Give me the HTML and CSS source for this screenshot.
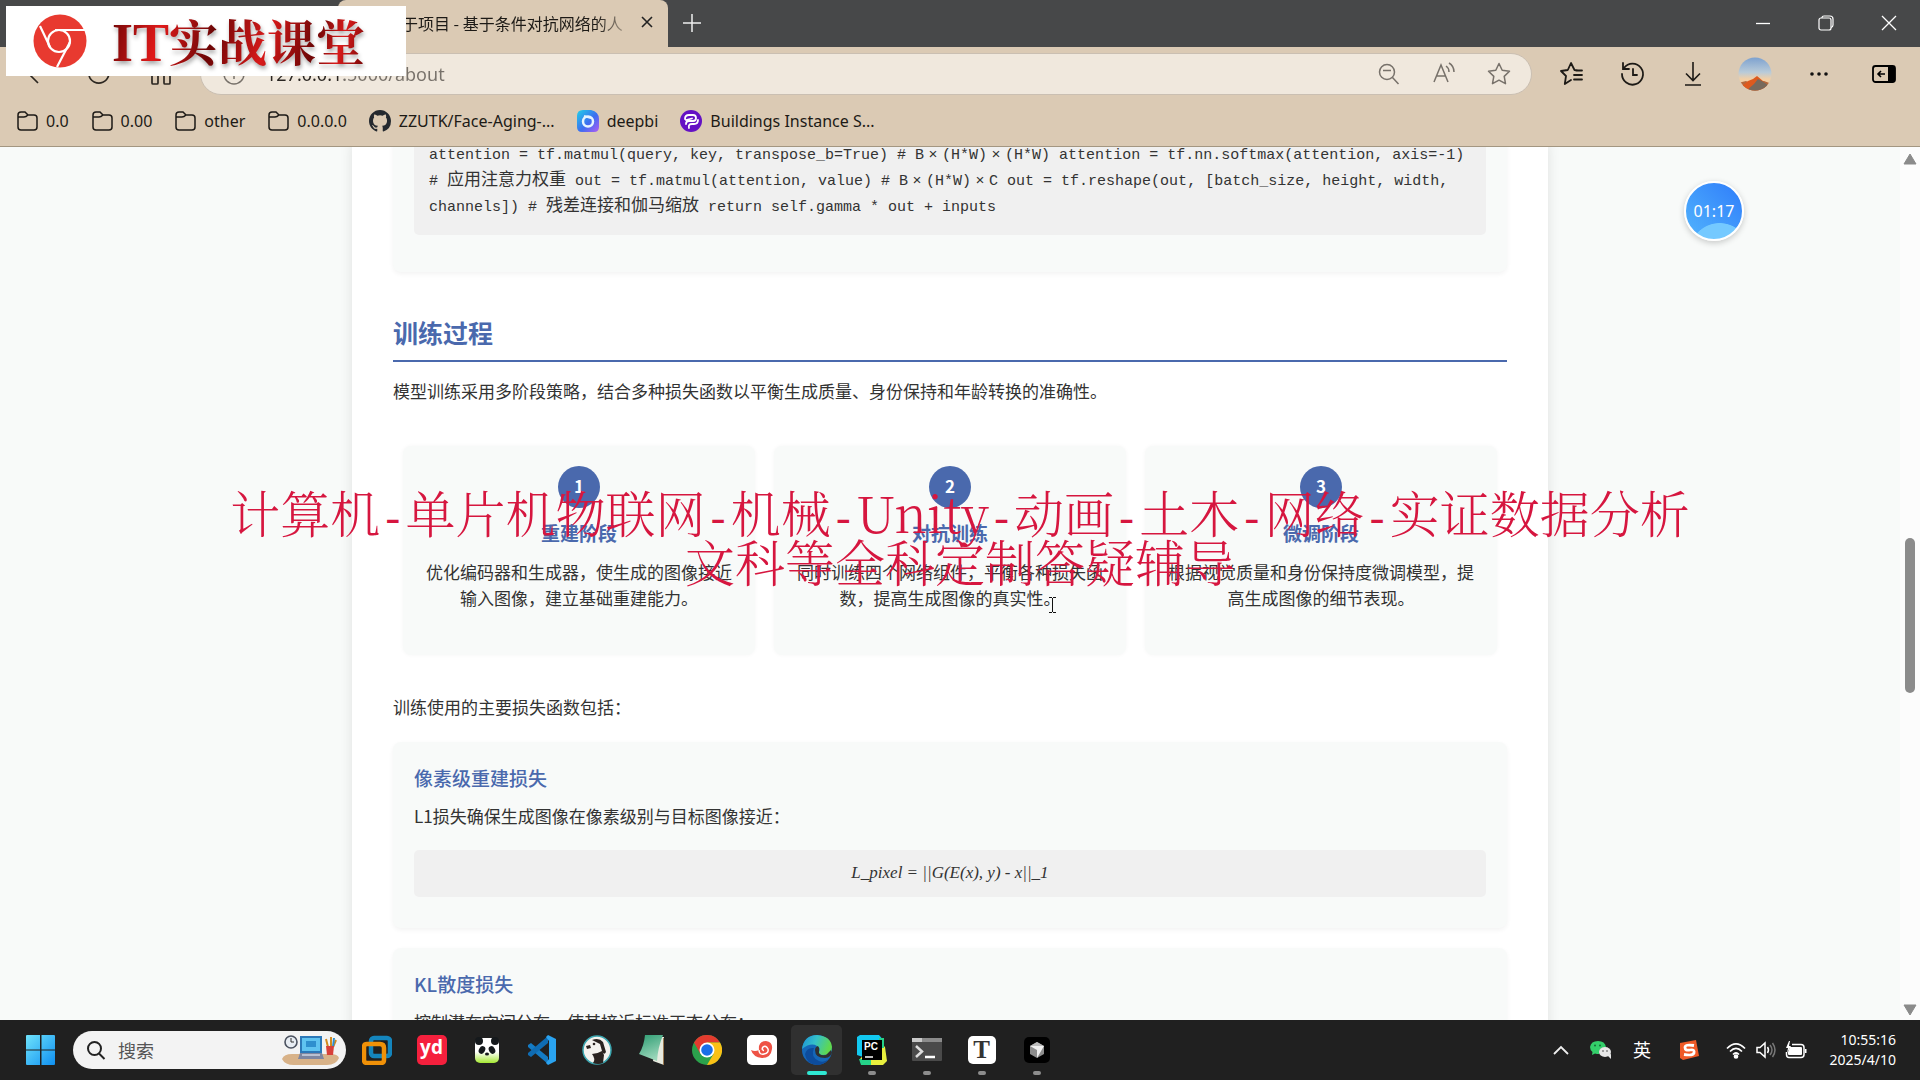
FILE: index.html
```html
<!DOCTYPE html>
<html lang="zh-CN">
<head>
<meta charset="utf-8">
<title>关于项目</title>
<link rel="stylesheet" href="styles.css">
</head>
<body>
<header class="browser">
  <div class="titlebar">
    <div class="tab-back"></div>
    <div class="tab">
      <span class="tab-title">关于项目 - 基于条件对抗网络的人</span>
      <button class="tab-close" aria-label="关闭标签页"><svg width="12" height="12" viewBox="0 0 12 12"><path d="M1 1l10 10M11 1L1 11" stroke="#222" stroke-width="1.6"/></svg></button>
    </div>
    <button class="tab-new" aria-label="新建标签页"><svg width="20" height="20" viewBox="0 0 20 20"><path d="M10 1v18M1 10h18" stroke="#eee" stroke-width="1.5"/></svg></button>
    <div class="window-controls">
      <button aria-label="最小化"><svg width="16" height="16" viewBox="0 0 16 16"><path d="M1 8.500h14" stroke="#fff" stroke-width="1.300"/></svg></button>
      <button aria-label="还原"><svg width="16" height="16" viewBox="0 0 16 16" fill="none" stroke="#fff" stroke-width="1.200"><rect x="1" y="3" width="12" height="12" rx="2"/><path d="M4 3V2.500Q4 1 6 1h6q3 0 3 3v6q0 2-2 2.500"/></svg></button>
      <button aria-label="关闭"><svg width="16" height="16" viewBox="0 0 16 16"><path d="M1 1l14 14M15 1L1 15" stroke="#fff" stroke-width="1.300"/></svg></button>
    </div>
  </div>

  <div class="toolbar">
    <div class="nav">
      <button aria-label="后退"><svg width="24" height="24" viewBox="0 0 24 24" fill="none" stroke="#2c2721" stroke-width="1.700"><path d="M15 3l-8 9 9 9"/></svg></button>
      <button aria-label="刷新"><svg width="24" height="24" viewBox="0 0 24 24" fill="none" stroke="#2c2721" stroke-width="1.700"><path d="M20 6a10 9.500 0 1 1-8-4M20 1v5h-5"/></svg></button>
      <button aria-label="主页"><svg width="24" height="24" viewBox="0 0 24 24" fill="none" stroke="#2c2721" stroke-width="1.700"><rect x="3" y="2" width="6" height="20" rx="1"/><rect x="15" y="2" width="6" height="20" rx="1"/></svg></button>
    </div>
    <div class="address">
      <svg width="24" height="24" viewBox="0 0 24 24" fill="none" stroke="#77716a" stroke-width="1.500"><circle cx="12" cy="12" r="10"/><path d="M12 10v7M12 6.500v1.500"/></svg>
      <input class="address-input" type="text" value="127.0.0.1:5000/about" aria-label="地址">
      <button aria-label="缩小"><svg width="24" height="24" viewBox="0 0 24 24" fill="none" stroke="#77716a" stroke-width="1.500"><circle cx="10" cy="10" r="7.500"/><path d="M6 8.500h8M15.500 15.500l6 6.500"/></svg></button>
      <button aria-label="朗读"><svg width="24" height="24" viewBox="0 0 24 24" fill="none" stroke="#77716a" stroke-width="1.500"><path d="M2 20L9 3l7 17M4.500 14h9M14 4q3 2 3 6M17 1q5 3 5 9"/></svg></button>
      <button aria-label="收藏"><svg width="24" height="24" viewBox="0 0 24 24" fill="none" stroke="#77716a" stroke-width="1.500" stroke-linejoin="round"><path d="M12 1.500l3.200 6.700 7.300 1-5.300 5.200 1.300 7.300L12 18.200l-6.500 3.500 1.300-7.300L1.500 9.200l7.300-1z"/></svg></button>
    </div>
    <div class="tools">
      <button aria-label="收藏夹"><svg width="26" height="26" viewBox="0 0 26 26" fill="none" stroke="#1d1a16" stroke-width="1.800" stroke-linejoin="round" stroke-linecap="round"><path d="M19 9.500l-3.500-.5-3.500-7-3.200 7L2 10l5 5-1.200 8 6.200-4M15 14h8M15 18.500h8M17 9.500h6"/></svg></button>
      <button aria-label="历史记录"><svg width="26" height="26" viewBox="0 0 26 26" fill="none" stroke="#1d1a16" stroke-width="1.800" stroke-linecap="round"><path d="M4 7a10.500 10.500 0 1 1-2 6M3 2v6h6M13 8v6h4"/></svg></button>
      <button aria-label="下载"><svg width="24" height="26" viewBox="0 0 24 26" fill="none" stroke="#1d1a16" stroke-width="1.600"><path d="M11 1v18M4 12.500l7 7 7-7M3 24h16"/></svg></button>
      <button aria-label="个人资料"><svg width="34" height="34" viewBox="0 0 34 34"><defs><clipPath id="av"><circle cx="17" cy="17" r="16.500"/></clipPath><linearGradient id="sky" x2="0" y2="1"><stop stop-color="#7ba0cf"/><stop offset=".45" stop-color="#b9cbd9"/><stop offset=".65" stop-color="#f2cfa5"/></linearGradient></defs><g clip-path="url(#av)"><path fill="url(#sky)" d="M0 0h34v34H0z"/><path fill="#b5683c" d="M0 26l8-2 4 2 14-2 8 3v7H0z"/><path fill="#dd5a1e" d="M4 29l6-5 5-2 4-3 6 5 5 6v4H4z"/><path fill="#77695c" d="M8 34l8-7 4-5 4 2 6 4 3 6z"/></g></svg></button>
      <button aria-label="更多"><svg width="20" height="6" viewBox="0 0 20 6" fill="#111"><circle cx="3" cy="3" r="1.800"/><circle cx="10" cy="3" r="1.800"/><circle cx="17" cy="3" r="1.800"/></svg></button>
      <button aria-label="侧栏"><svg width="24" height="20" viewBox="0 0 24 20"><rect x="1" y="2" width="22" height="16" rx="2.500" fill="none" stroke="#000" stroke-width="1.800"/><path d="M16 2h5q2 0 2 2v12q0 2-2 2h-5z"/><path d="M13 10H6M9 7l-3 3 3 3" fill="none" stroke="#000" stroke-width="1.600"/></svg></button>
    </div>
  </div>

  <nav class="bookmarks">
    <a href="#"><svg class="folder" viewBox="0 0 22 22"><path d="M2 5q0-3 3-3h4l3 3h6q3 0 3 3v9q0 3-3 3H5q-3 0-3-3zM2 7h6q2 0 4-2"/></svg>0.0</a>
    <a href="#"><svg class="folder" viewBox="0 0 22 22"><path d="M2 5q0-3 3-3h4l3 3h6q3 0 3 3v9q0 3-3 3H5q-3 0-3-3zM2 7h6q2 0 4-2"/></svg>0.00</a>
    <a href="#"><svg class="folder" viewBox="0 0 22 22"><path d="M2 5q0-3 3-3h4l3 3h6q3 0 3 3v9q0 3-3 3H5q-3 0-3-3zM2 7h6q2 0 4-2"/></svg>other</a>
    <a href="#"><svg class="folder" viewBox="0 0 22 22"><path d="M2 5q0-3 3-3h4l3 3h6q3 0 3 3v9q0 3-3 3H5q-3 0-3-3zM2 7h6q2 0 4-2"/></svg>0.0.0.0</a>
    <a href="#"><svg width="22" height="22" viewBox="0 0 16 16" fill="#24292f"><path d="M8 0C3.580 0 0 3.580 0 8c0 3.540 2.290 6.530 5.470 7.590.4.070.55-.17.55-.38 0-.19-.01-.82-.01-1.490-2.010.37-2.530-.49-2.690-.94-.09-.23-.48-.94-.82-1.130-.28-.15-.68-.52-.01-.53.63-.01 1.080.58 1.230.82.72 1.210 1.870.87 2.330.66.07-.52.28-.87.51-1.070-1.780-.2-3.640-.89-3.640-3.950 0-.87.31-1.590.82-2.150-.08-.2-.36-1.020.08-2.120 0 0 .67-.21 2.200.82a7.600 7.600 0 0 1 4 0c1.530-1.040 2.200-.82 2.200-.82.44 1.100.16 1.920.08 2.120.51.56.82 1.270.82 2.150 0 3.070-1.870 3.750-3.650 3.950.29.25.54.73.54 1.480 0 1.070-.01 1.930-.01 2.200 0 .21.15.46.55.38A8 8 0 0 0 16 8c0-4.420-3.580-8-8-8z"/></svg>ZZUTK/Face-Aging-...</a>
    <a href="#"><svg width="22" height="22" viewBox="0 0 22 22"><defs><linearGradient id="db" x2="1" y2="1"><stop stop-color="#22d0e8"/><stop offset=".55" stop-color="#3c6df0"/><stop offset="1" stop-color="#b15cf5"/></linearGradient></defs><path fill="url(#db)" d="M6 0h8q8 2 8 9v8q0 5-5 5H5q-5 0-5-5V6q0-6 6-6z"/><circle cx="11" cy="11.500" r="5" fill="none" stroke="#e6f4ff" stroke-width="2.500"/><path d="M7 6l7 2" stroke="#e6f4ff" stroke-width="2"/></svg>deepbi</a>
    <a href="#"><svg width="22" height="22" viewBox="0 0 22 22"><circle cx="11" cy="11" r="11" fill="#6411c4"/><path d="M5 9Q5 5 9 5h4q3 0 3 3t-3 3H9q-3 0-3 3M9 18q-1-4 3-4h2q4 0 4-4M6 10l6-1.500" fill="none" stroke="#fff" stroke-width="1.800" stroke-linecap="round"/></svg>Buildings Instance S...</a>
  </nav>
</header>

<main class="viewport">
  <div class="scroll-area">
    <article class="page">
      <section class="panel panel-code">
        <div class="code">attention = tf.matmul(query, key, transpose_b=True) # B<i>×</i>(H*W)<i>×</i>(H*W) attention = tf.nn.softmax(attention, axis=-1)<br># <b>应用注意力权重</b> out = tf.matmul(attention, value) # B<i>×</i>(H*W)<i>×</i>C out = tf.reshape(out, [batch_size, height, width,<br>channels]) # <b>残差连接和伽马缩放</b> return self.gamma * out + inputs</div>
      </section>
      <h2>训练过程</h2>
      <p class="intro">模型训练采用多阶段策略，结合多种损失函数以平衡生成质量、身份保持和年龄转换的准确性。</p>
      <div class="steps">
        <section class="step"><div class="step-no">1</div><h3>重建阶段</h3><p>优化编码器和生成器，使生成的图像接近输入图像，建立基础重建能力。</p></section>
        <section class="step"><div class="step-no">2</div><h3>对抗训练</h3><p>同时训练四个网络组件，平衡各种损失函数，提高生成图像的真实性。</p></section>
        <section class="step"><div class="step-no">3</div><h3>微调阶段</h3><p>根据视觉质量和身份保持度微调模型，提高生成图像的细节表现。</p></section>
      </div>
      <p class="lead">训练使用的主要损失函数包括：</p>
      <section class="panel loss">
        <h3>像素级重建损失</h3>
        <p>L1损失确保生成图像在像素级别与目标图像接近：</p>
        <div class="formula">L_pixel = ||G(E(x), y) - x||_1</div>
      </section>
      <section class="panel loss">
        <h3>KL散度损失</h3>
        <p>控制潜在空间分布，使其接近标准正态分布：</p>
      </section>
    </article>
  </div>
  <div class="scrollbar">
    <svg width="14" height="12" viewBox="0 0 14 12"><path d="M7 1l6 10H1z" fill="#8b8b8b" stroke="#8b8b8b" stroke-linejoin="round"/></svg>
    <div class="track"><div class="thumb"></div></div>
    <svg width="14" height="12" viewBox="0 0 14 12"><path d="M7 11l6-10H1z" fill="#8b8b8b" stroke="#8b8b8b" stroke-linejoin="round"/></svg>
  </div>
</main>

<footer class="taskbar">
  <button class="start" aria-label="开始"><svg width="30" height="30" viewBox="0 0 30 30"><defs><linearGradient id="win" x2="1" y2="1"><stop stop-color="#6fe3fb"/><stop offset="1" stop-color="#0f8ff0"/></linearGradient></defs><path fill="url(#win)" d="M0 1q0-1 1-1h13v14.500H0zM15.500 0H28q1 0 1 1v13.500H15.500zM0 15.500h14V30H1q-1 0-1-1zM15.500 15.500H29V29q0 1-1 1H15.500z"/></svg></button>
  <label class="search">
    <svg width="20" height="20" viewBox="0 0 20 20" fill="none" stroke="#222" stroke-width="2"><circle cx="8.500" cy="8.500" r="6.500"/><path d="M13 13.500l5.500 5.500"/></svg>
    <input type="text" placeholder="搜索" aria-label="搜索">
    <svg width="58" height="34" viewBox="0 0 58 34"><path d="M0 26q2-5 10-5h38q8 0 9 4-3 7-12 7H12Q3 32 0 26z" fill="#d8b288"/><circle cx="9" cy="9" r="6" fill="#e8edf3" stroke="#4b5260" stroke-width="1.600"/><path d="M9 5v4h3" stroke="#333" fill="none"/><path d="M18 3h22v17H18z" fill="#2b78b8"/><path d="M20 5h18v13H20z" fill="#5fc3f0"/><path d="M24 8h10v6H24z" fill="#2e8fce"/><path d="M18 20h22l2 6H16z" fill="#7e86a0"/><path d="M20 22h18" stroke="#cfd4e2" stroke-width="1.500"/><path d="M46 14l-2-8M49 14V4M51 14l3-7" stroke="#d28a1e" stroke-width="2"/><path d="M51 14l1-9" stroke="#2e8fce" stroke-width="2"/><path d="M44 13h8l-1 9h-6z" fill="#d8403a"/></svg>
  </label>
  <div class="apps">
    <button aria-label="VMware"><svg width="30" height="30" viewBox="0 0 30 30" fill="none" stroke-width="4.500"><rect x="9" y="3" width="19" height="18" rx="3" stroke="#1485bd"/><path d="M22 16v9q0 3-3 3H5q-3 0-3-3V12q0-3 3-3h13q4 0 4 4v4" stroke="#f09108"/></svg></button>
    <button aria-label="有道"><span class="yd">yd</span></button>
    <button aria-label="熊猫"><svg width="26" height="26" viewBox="0 0 26 26"><defs><linearGradient id="pd" x2="0" y2="1"><stop offset=".55" stop-color="#fff"/><stop offset="1" stop-color="#a4e831"/></linearGradient></defs><rect x="1" y="1" width="24" height="25" rx="5" fill="url(#pd)"/><g fill="#15191c"><circle cx="5" cy="4" r="4"/><circle cx="21" cy="4" r="4"/><ellipse cx="8" cy="13" rx="3" ry="4" transform="rotate(30 8 13)"/><ellipse cx="18" cy="13" rx="3" ry="4" transform="rotate(-30 18 13)"/><ellipse cx="13" cy="17" rx="2" ry="1.500"/></g></svg></button>
    <button aria-label="VS Code"><svg width="30" height="30" viewBox="0 0 30 30"><path d="M1 10l3-2 17 14v7L1 12z" fill="#147bc4"/><path d="M1 20l3 2L21 8V1L1 18z" fill="#0f6cb3"/><path d="M21 0l8 4v22l-8 4-2-2 3-4V6l-3-4z" fill="#2aa3f0"/></svg></button>
    <button aria-label="DBeaver"><svg width="30" height="30" viewBox="0 0 30 30"><circle cx="15" cy="15" r="14" fill="#f4f2ee" stroke="#3ba6b0" stroke-width="1.500"/><path d="M10 5q7-3 11 2l3 10q-2 4-4-1l-2-7q-4-2-8-4zM4 11l4-1 1 3-4 1zM10 19q5 0 10-3l2 4-1 8q-5 2-10 0 3-4-1-9z" fill="#2a2320"/><circle cx="12" cy="9" r="1.300" fill="#2a2320"/></svg></button>
    <button aria-label="Notes"><svg width="28" height="32" viewBox="0 0 28 32"><defs><linearGradient id="nt" x2=".4" y2="1"><stop stop-color="#2d9c72"/><stop offset="1" stop-color="#9bd6ba"/></linearGradient></defs><path d="M20 3h6v28l-11-4z" fill="#e7eadf"/><path d="M7 1h18q-5 12-6 26L1 20Q6 12 7 1z" fill="url(#nt)"/><path d="M25.500 4v27" stroke="#9b7a52"/></svg></button>
    <button aria-label="Chrome"><svg width="30" height="30" viewBox="0 0 30 30"><circle cx="15" cy="15" r="15" fill="#2ba24c"/><path d="M2 7.500A15 15 0 0 1 28 7.500H15L8.500 19z" fill="#e33b2e"/><path d="M28 7.500A15 15 0 0 1 15 30l6.500-11L15 7.500z" fill="#fbc116"/><circle cx="15" cy="15" r="7.500" fill="#fff"/><circle cx="15" cy="15" r="5.800" fill="#1a6fe8"/></svg></button>
    <button aria-label="Spiral"><svg width="30" height="30" viewBox="0 0 30 30"><rect width="30" height="30" rx="5" fill="#fff"/><path d="M4 15q4 2 8 0-1-9 7-9 7 1 6 8-1 9-10 9-9-1-11-8z" fill="#ee5346"/><path d="M12 15q0 5 5 4 5-1 4-5-2-4-5-2-2 3 1 3.500" fill="none" stroke="#fff" stroke-width="1.500"/></svg></button>
    <button class="is-active" aria-label="Edge"><svg width="30" height="30" viewBox="0 0 30 30"><defs><linearGradient id="eg" x2="1" y2=".3"><stop stop-color="#1a8fd8"/><stop offset=".5" stop-color="#35c1c8"/><stop offset="1" stop-color="#5fd84f"/></linearGradient></defs><circle cx="15" cy="15" r="15" fill="#1567b8"/><path d="M0 14Q2 0 15 0q14 1 15 12 0 8-9 8-5 0-4-3 2-4-2-6-6-4-15 3z" fill="url(#eg)"/><path d="M12 13q-4 9 5 13 5 2 10-2-5 6-12 6Q4 29 3 19q2-7 9-6z" fill="#0d4c9c"/><path d="M13 15q0 8 10 8 3 0 5-2l2-3-1-3-5 5q-8 1-7-4 1-3-1-5-3 1-3 4z" fill="#303030"/></svg></button>
    <button class="is-open" aria-label="PyCharm"><svg width="30" height="30" viewBox="0 0 30 30"><path d="M0 2l3-2h19l5 6v10L9 23 0 20z" fill="#12c8f0"/><path d="M20 5l8 7 2 14-4 4H5l-2-6z" fill="#e8ef3e"/><path d="M22 3h5v10h-5zM2 24h12v6H4z" fill="#25d389"/><rect x="5" y="5" width="20" height="20" fill="#000"/><path d="M8 22h8" stroke="#fff" stroke-width="1.500"/><text x="7" y="15" fill="#fff" class="pc">PC</text></svg></button>
    <button class="is-open" aria-label="Terminal"><svg width="30" height="24" viewBox="0 0 30 24"><rect width="30" height="23" rx="1" fill="#4a4a4a"/><path d="M0 0h30v4H0z" fill="#8b8b8b"/><path d="M0 0h10v4H0z" fill="#c9c9c9"/><path d="M4 8l6 5.500L4 19" fill="none" stroke="#ddd" stroke-width="2.500"/><path d="M13 19h10" stroke="#fff" stroke-width="2.500"/></svg></button>
    <button class="is-open" aria-label="Typora"><span class="typora">T</span></button>
    <button class="is-open" aria-label="Cursor"><svg width="26" height="26" viewBox="0 0 26 26"><rect width="26" height="26" rx="5" fill="#000"/><path d="M13 5l7 4v8l-7 4-7-4V9z" fill="#8c8c8c"/><path d="M6 9h14l-7 12v-8z" fill="#eee"/><path d="M13 5l7 4H6z" fill="#bbb"/></svg></button>
  </div>
  <div class="tray">
    <svg width="16" height="10" viewBox="0 0 16 10"><path d="M1 9l7-7 7 7" fill="none" stroke="#eee" stroke-width="1.800"/></svg>
    <svg width="22" height="20" viewBox="0 0 22 20"><path d="M8 1q7 0 8 6-7 0-7 7-2 0-4-.5L2 15l.5-3Q0 10 0 7q1-6 8-6z" fill="#34cf6b"/><ellipse cx="15" cy="12" rx="6" ry="5" fill="#e8e8e8"/><path d="M17 15l4 4v-5z" fill="#e8e8e8"/><g fill="#176b36"><circle cx="5" cy="5.500" r="1"/><circle cx="10" cy="5.500" r="1"/></g><g fill="#888"><circle cx="13" cy="11" r="1"/><circle cx="17" cy="11" r="1"/></g></svg>
    <span class="ime">英</span>
    <svg width="22" height="22" viewBox="0 0 22 22"><path d="M2 4l16-3 3 16-16 4-3-2z" fill="#ef5a27"/><path d="M16 6.500Q7 5 7 8.500t5 2.500 4 3q-1 3-10 1.500" fill="none" stroke="#fff" stroke-width="2.800"/></svg>
    <span></span>
    <svg width="20" height="17" viewBox="0 0 20 17" fill="none" stroke="#fff" stroke-width="1.700"><path d="M1 6.500q9-9 18 0M4 9.500q6-6 12 0M7 12.500q3-3 6 0"/><circle cx="10" cy="14.500" r="1.500" fill="#fff"/></svg>
    <svg width="20" height="18" viewBox="0 0 20 18" fill="none" stroke="#fff" stroke-width="1.500"><path d="M1 6.500h3l5-4.500v14l-5-4.500H1zM11.500 6q2 3 0 6"/><path d="M14 4q4 5 0 10M16.500 2q5 7 0 14" stroke="#777"/></svg>
    <svg width="22" height="18" viewBox="0 0 22 18"><path d="M5 6h11q1 0 1 1v6q0 1-1 1H4q-1 0-1-1v-2z" fill="#fff"/><path d="M7 3.500h9q3 0 3 3v7q0 3-3 3H4q-2.500 0-2.500-3V11" fill="none" stroke="#fff" stroke-width="1.500"/><path d="M20 8h1.500v4H20zM4 0L1 7h2l-1 5 4-7H4l1-5z" fill="#fff"/></svg>
    <div class="clock">10:55:16<br>2025/4/10</div>
  </div>
</footer>

<div class="brand">
  <svg width="54" height="54" viewBox="0 0 54 54"><circle cx="27" cy="27" r="26.500" fill="#e83a30"/><g fill="none" stroke="#fff" stroke-width="2.200"><circle cx="26" cy="27" r="11"/><path d="M7 12l10 21M22 16h30M37 28L24 53"/></g></svg>
  <span class="brand-text"><span class="brand-it">IT</span>实战课堂</span>
</div>
<div class="watermark"><div>计算机<s>-</s>单片机物联网<s>-</s>机械<s>-</s>Unity<s>-</s>动画<s>-</s>土木<s>-</s>网络<s>-</s>实证数据分析</div><div>文科等全科定制答疑辅导</div></div>
<div class="timer">01:17</div>
<svg class="ibeam" width="9" height="16" viewBox="0 0 9 16"><path d="M1 .5h3M5 .5h3M4.500 1v14M1 15.500h3M5 15.500h3" stroke="#111" fill="none"/></svg>
</body>
</html>
```
FILE: styles.css
```css
* { box-sizing: border-box; }
body, h2, h3, p { margin: 0; }
body {
  display: flex;
  flex-direction: column;
  height: 100vh;
  overflow: hidden;
  font-family: "Noto Sans", "Noto Sans CJK SC", sans-serif;
  font-size: 16px;
  color: #333;
}
svg { display: block; flex: none; }
button {
  display: flex;
  align-items: center;
  justify-content: center;
  padding: 0;
  border: 0;
  background: none;
}
input { min-width: 0; border: 0; background: none; padding: 0; outline: 0; }

/* Browser chrome */
.browser { flex: none; background: #dbcab4; border-bottom: 1px solid #a39681; }
.titlebar { display: flex; height: 47px; background: #474849; }
.titlebar button { padding-bottom: 2px; }
.tab-back { width: 338px; flex: none; }
.tab {
  display: flex;
  align-items: center;
  justify-content: space-between;
  width: 330px;
  padding: 0 15px 2px 48px;
  border-radius: 8px 8px 0 0;
  background: #dbcab4;
  color: #1d1a16;
}
.tab-title {
  width: 242px;
  overflow: hidden;
  white-space: nowrap;
  font-family: "Noto Sans CJK SC", sans-serif;
  mask-image: linear-gradient(90deg, #000 210px, transparent 250px);
}
.tab-new { width: 48px; }
.window-controls { display: flex; margin-left: auto; }
.window-controls button { width: 63px; }

.toolbar { display: flex; gap: 9px; height: 49px; padding: 6px 4px 1px 0; }
.nav { display: grid; grid-template-columns: 68px 62px 61px; }
.address {
  display: flex;
  flex: 1;
  align-items: center;
  padding: 0 5px 0 21px;
  border: 1px solid #cabfb2;
  border-radius: 21px;
  background: #f0e8dd;
}
.address button { width: 55px; }
.address-input {
  flex: 1;
  margin-left: 20px;
  font: 18px "Noto Sans", sans-serif;
  color: transparent;
  background: linear-gradient(90deg, #2a2622 78px, #77716a 78px);
  background-clip: text;
}
.tools { display: grid; grid-template-columns: 61px 61px 61px 62px 66px 64px; }

.bookmarks {
  display: flex;
  align-items: center;
  gap: 22px;
  height: 50px;
  padding-left: 16px;
}
.bookmarks a {
  display: flex;
  align-items: center;
  gap: 8px;
  color: #1d1a16;
  font-size: 16px;
  text-decoration: none;
}
.folder { width: 22px; height: 22px; fill: none; stroke: #1d1a16; stroke-width: 1.5; }

/* Web page */
.viewport { display: flex; flex: 1; min-height: 0; overflow: hidden; background: #f8faf9; }
.scroll-area { flex: 1; overflow: hidden; }
.page {
  max-width: 1196px;
  min-height: 100%;
  margin: -4px auto 0;
  padding: 0 41px;
  background: #fff;
  box-shadow: 0 0 12px rgba(0, 0, 0, .1);
  font-family: "Noto Sans CJK SC", sans-serif;
  font-size: 17px;
  line-height: 26px;
}
.panel {
  padding: 21px 21px 31px;
  border-radius: 8px;
  background: #f8faf9;
  box-shadow: 0 2px 5px rgba(0, 0, 0, .05);
}
.panel-code { padding: 0 21px 37px; border-radius: 0 0 8px 8px; }
.code {
  padding: 0 15px 14px;
  border-radius: 0 0 5px 5px;
  background: #f0f0f0;
  font-family: "Liberation Mono", "Noto Sans CJK SC", monospace;
  font-size: 15px;
  white-space: nowrap;
}
.code i { display: inline-block; width: 18px; font-style: normal; text-align: center; }
.code b { font-size: 17px; font-weight: 400; line-height: 20px; }
h2 {
  margin-top: 41px;
  padding-bottom: 9px;
  border-bottom: 2px solid #4a69ad;
  color: #4a69ad;
  font-size: 25px;
  line-height: 38px;
}
h3 { color: #4a69ad; font-size: 19px; line-height: 30px; }
.intro { margin-top: 16px; }
.steps { display: flex; gap: 19px; margin: 42px 10px 39px; }
.step {
  flex: 1;
  padding: 20px 20px 44px;
  border-radius: 8px;
  background: #f8faf9;
  box-shadow: 0 0 4px rgba(0, 0, 0, .04);
  text-align: center;
}
.step-no {
  width: 42px;
  height: 42px;
  margin: 0 auto 10px;
  border-radius: 50%;
  background: #4a69ad;
  color: #fff;
  font-weight: 700;
  line-height: 40px;
}
.step p { margin-top: 11px; }
.lead { margin-bottom: 22px; }
.loss { margin-top: 20px; }
.loss h3 { font-weight: 500; }
.loss p { margin-top: 10px; }
.formula {
  margin-top: 21px;
  padding: 10px 10px 11px;
  border-radius: 5px;
  background: #f0f0f0;
  font-family: "Liberation Serif", serif;
  font-style: italic;
  text-align: center;
}
.scrollbar {
  display: flex;
  flex-direction: column;
  align-items: center;
  width: 20px;
  padding: 6px 0 4px;
  background: #fcfcfc;
}
.track { flex: 1; }
.thumb { width: 10px; height: 155px; margin-top: 373px; border-radius: 5px; background: #8b8b8b; }

/* Taskbar */
.taskbar {
  display: flex;
  flex: none;
  align-items: center;
  height: 60px;
  padding: 0 24px 0 26px;
  background: #202020;
}
.search {
  display: flex;
  align-items: center;
  width: 273px;
  height: 38px;
  margin: 0 3px 0 17px;
  padding: 0 6px 0 13px;
  border-radius: 19px;
  background: #f3f3f3;
}
.search input { flex: 1; margin-left: 12px; font: 18px "Noto Sans CJK SC", sans-serif; }
.search input::placeholder { color: #555; }
.apps { display: flex; }
.apps button { position: relative; width: 51px; height: 50px; margin: 0 2px; border-radius: 5px; }
.apps .is-active { background: #303030; }
.apps .is-active::after, .apps .is-open::after {
  content: "";
  position: absolute;
  bottom: 0;
  width: 8px;
  height: 4px;
  border-radius: 2px;
  background: #8d8d8d;
}
.apps .is-active::after { width: 20px; background: #2fe8d3; }
.yd, .typora { width: 30px; height: 30px; border-radius: 5px; }
.yd { background: #f5203d; color: #fff; font: 700 19px/25px "Open Sans", sans-serif; }
.typora { width: 28px; height: 28px; background: #fff; color: #333; font: 700 25px/28px "Liberation Serif", serif; }
.pc { font: 700 10px "Liberation Sans", sans-serif; }
.tray {
  display: grid;
  grid-template-columns: 40px 40px 42px 52px 6px 30px 30px 30px 85px;
  align-items: center;
  justify-items: center;
  margin-left: auto;
  color: #fff;
}
.ime { font-size: 18px; line-height: 24px; }
.clock { justify-self: end; font-size: 14px; line-height: 20px; text-align: right; }

/* Overlays */
.brand {
  position: absolute;
  top: 6px;
  left: 6px;
  display: flex;
  align-items: center;
  gap: 25px;
  width: 400px;
  height: 70px;
  padding-left: 27px;
  background: #fff;
}
.brand-text {
  background: linear-gradient(105deg, #6d0606, #e01a1a 20%, #6d0606 40%, #d81a1a 60%, #6d0606 78%, #d81a1a 88%, #6d0606);
  background-clip: text;
  color: transparent;
  font: 700 49px/66px "Noto Serif CJK SC", "Noto Sans CJK SC", serif;
  filter: drop-shadow(1px 3px 2px rgba(0, 0, 0, .35));
  white-space: nowrap;
}
.brand-it { font-family: "Liberation Serif", serif; font-size: 54px; }
.watermark {
  position: absolute;
  top: 487px;
  left: 0;
  right: 0;
  color: #d6163f;
  font: 300 50px/49px "Noto Serif CJK SC", "Noto Sans CJK SC", serif;
  text-align: center;
  white-space: nowrap;
  pointer-events: none;
}
.watermark s {
  font-family: "Liberation Mono", monospace;
  font-size: 42px;
  line-height: 1px;
  text-decoration: none;
}
.timer {
  position: absolute;
  top: 181px;
  right: 176px;
  width: 60px;
  height: 60px;
  border: 2px solid #fff;
  border-radius: 50%;
  background: radial-gradient(circle at 60% 125%, #74c9ff 38%, transparent 39%), linear-gradient(225deg, #2f7dfa, #52b4fd);
  box-shadow: 0 2px 6px rgba(0, 0, 0, .2);
  color: #fff;
  font-size: 16px;
  line-height: 56px;
  text-align: center;
}
.ibeam { position: absolute; top: 597px; left: 1048px; }
```
